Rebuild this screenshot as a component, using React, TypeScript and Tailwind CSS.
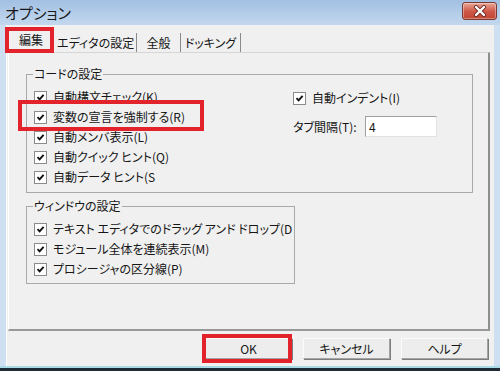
import React from 'react';

const RED = 'border-[4px] border-[#e3232b]';

function Check() {
  return (
    <span className="flex h-[13px] w-[13px] shrink-0 items-center justify-center border border-[#8b8b8b] bg-white">
      <svg width="9" height="9" viewBox="0 0 9 9">
        <path d="M1.5 4.2 L3.6 6.4 L7.6 1.8" stroke="#111" strokeWidth="1.9" fill="none" />
      </svg>
    </span>
  );
}

function CheckRow({ label }: { label: string }) {
  return (
    <div className="flex h-[20px] items-center gap-[6px] whitespace-nowrap">
      <Check />
      <span>{label}</span>
    </div>
  );
}

function CloseButton() {
  return (
    <div className="flex h-[18px] w-[35px] items-center justify-center rounded-[3px] border border-[#7a3a32] bg-gradient-to-b from-[#e9a898] via-[#cf5a4b] to-[#c0452f] shadow-[inset_0_0_0_1px_rgba(255,255,255,0.35)]">
      <svg width="14" height="12" viewBox="0 0 14 12">
        <path d="M3 2 L11 10 M11 2 L3 10" stroke="#6b2a22" strokeWidth="4" strokeLinecap="round" />
        <path d="M3 2 L11 10 M11 2 L3 10" stroke="#ffffff" strokeWidth="2.4" strokeLinecap="round" />
      </svg>
    </div>
  );
}

function Button({ label }: { label: string }) {
  return (
    <div className="flex h-[21px] w-[87px] items-center justify-center border border-[#a3a3a3] border-l-[#fbfbfb] border-t-[#fbfbfb] bg-[#ededed] shadow-[1px_1px_0_#7d7d7d]">
      {label}
    </div>
  );
}

const codeOptions = [
  '自動構文チェック(K)',
  '変数の宣言を強制する(R)',
  '自動メンバ表示(L)',
  '自動クイック ヒント(Q)',
  '自動データ ヒント(S',
];

const windowOptions = [
  'テキスト エディタでのドラッグ アンド ドロップ(D',
  'モジュール全体を連続表示(M)',
  'プロシージャの区分線(P)',
];

export default function App() {
  return (
    <div className="relative flex h-[371px] w-[500px] flex-col overflow-hidden bg-[#cddff1] text-[12px] leading-[14px] text-[#161616] [font-family:'Noto_Sans_CJK_JP','Noto_Sans',sans-serif] [font-feature-settings:'palt']">
      {/* title bar */}
      <div className="flex h-[25px] shrink-0 items-center bg-gradient-to-b from-[#a2c0e3] to-[#c3d8ee] pl-[5px] pr-[3px]">
        <span className="text-[15px] leading-[18px] text-[#1a1a1a]">オプション</span>
        <div className="ml-auto -mt-[3px]">
          <CloseButton />
        </div>
      </div>

      {/* client */}
      <div className="mx-[6px] flex flex-1 flex-col border-l border-white bg-[#f0f0f0]">
        {/* tabs */}
        <div className="flex h-[27px] items-end pl-[1px]">
          <div className="flex h-[25px] w-[46px] items-center justify-center border-l border-t border-r border-l-white border-t-white border-r-[#9a9a9a] bg-[#f0f0f0]">
            編集
          </div>
          <div className="flex h-[19px] w-[83px] items-center border-r border-[#8a8a8a] pl-[3px]">エディタの設定</div>
          <div className="flex h-[19px] w-[44px] items-center justify-center border-r border-[#8a8a8a]">全般</div>
          <div className="flex h-[19px] w-[60px] items-center justify-center border-r border-[#8a8a8a]">ドッキング</div>
        </div>

        {/* panel */}
        <div className="ml-[1px] mr-[4px] h-[279px] border-l border-t border-l-white border-t-[#d6d6d6] border-r-2 border-b-2 border-r-[#8e8e8e] border-b-[#999999] pl-[17px] pt-[14px]">
          <fieldset className="w-[447px] border border-[#a9a9a9]">
            <legend className="ml-[6px] px-[1px] leading-[14px]">コードの設定</legend>
            <div className="flex pb-[5px] pt-[6px]">
              <div className="ml-[7px] flex w-[259px] flex-col">
                {codeOptions.map(o => (
                  <CheckRow key={o} label={o} />
                ))}
              </div>
              <div className="mt-[1px] flex flex-col">
                <CheckRow label="自動インデント(I)" />
                <div className="mt-[8px] flex h-[21px] items-center whitespace-nowrap">
                  <span className="w-[72px]">タブ間隔(T):</span>
                  <div className="flex h-[21px] w-[72px] items-center border border-[#a0a0a0] border-b-[#e3e3e3] border-r-[#e3e3e3] bg-white pl-[3px]">
                    4
                  </div>
                </div>
              </div>
            </div>
          </fieldset>

          <fieldset className="mt-[6px] w-[269px] border border-[#a9a9a9]">
            <legend className="ml-[6px] px-[1px] leading-[14px]">ウィンドウの設定</legend>
            <div className="ml-[7px] flex flex-col pb-[4px] pt-[6px]">
              {windowOptions.map(o => (
                <CheckRow key={o} label={o} />
              ))}
            </div>
          </fieldset>
        </div>

        {/* buttons */}
        <div className="mt-[7px] flex justify-end gap-[11px] pr-[6px]">
          <Button label="OK" />
          <Button label="キャンセル" />
          <Button label="ヘルプ" />
        </div>
      </div>

      {/* bottom frame */}
      <div className="h-[2px] shrink-0 bg-[#a9dbe6]" />
      <div className="h-[3px] shrink-0 bg-[#1f2a36]" />

      {/* red annotations */}
      <div className={`pointer-events-none absolute left-[5px] top-[27px] h-[26px] w-[49px] ${RED}`} />
      <div className={`pointer-events-none absolute left-[18px] top-[100px] h-[31px] w-[186px] ${RED}`} />
      <div className={`pointer-events-none absolute left-[202px] top-[334px] h-[29px] w-[90px] ${RED}`} />
    </div>
  );
}
